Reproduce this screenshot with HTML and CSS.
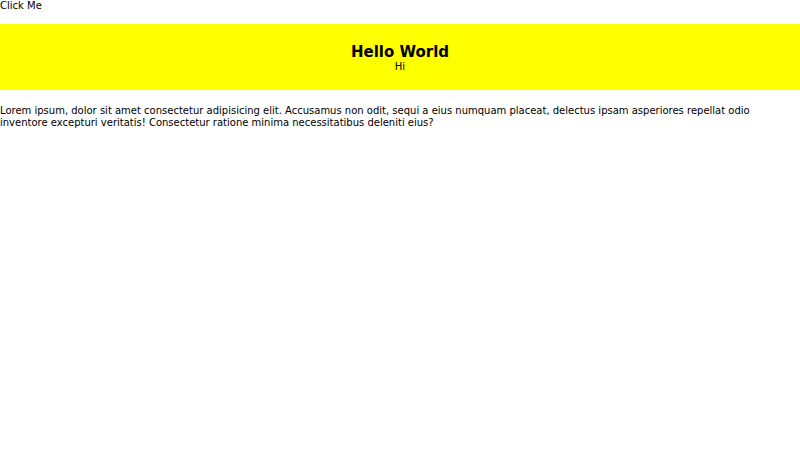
FILE: index.html
```html
<!DOCTYPE html>
<html>
<head>
<meta charset="utf-8">
<link rel="stylesheet" href="styles.css">
</head>
<body>
<div class="click">Click Me</div>
<header class="banner">
  <h1 class="title">Hello World</h1>
  <div class="sub">Hi</div>
</header>
<p class="text">Lorem ipsum, dolor sit amet consectetur adipisicing elit. Accusamus non odit, sequi a eius numquam placeat, delectus ipsam asperiores repellat odio inventore excepturi veritatis! Consectetur ratione minima necessitatibus deleniti eius?</p>
</body>
</html>
```
FILE: styles.css
```css
html, body {
  margin: 0;
  padding: 0;
  background: #fff;
}
body {
  font-family: "DejaVu Sans", sans-serif;
  font-size: 10px;
  color: #000;
}
.click {
  line-height: 12px;
}
.banner {
  margin-top: 12px;
  background: #ffff00;
  text-align: center;
  padding: 19px 0 17px;
}
.title {
  margin: 0;
  font-size: 15px;
  font-weight: bold;
  line-height: 18px;
}
.sub {
  line-height: 12px;
}
.text {
  margin: 15px 0 0;
  line-height: 12px;
}
```
